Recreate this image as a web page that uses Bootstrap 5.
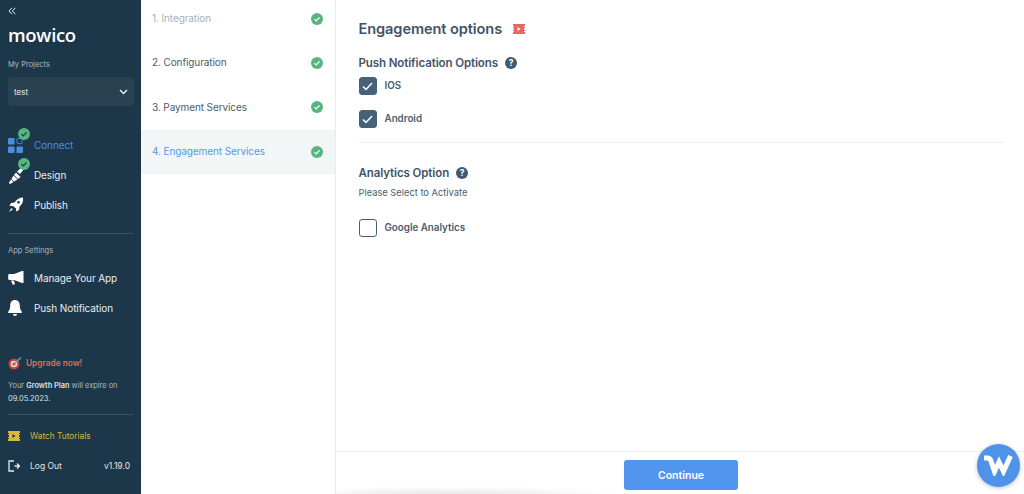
<!DOCTYPE html>
<html lang="en"><head><meta charset="utf-8"><title>Mowico</title>
<link href="https://cdn.jsdelivr.net/npm/bootstrap@5.3.0/dist/css/bootstrap.min.css" rel="stylesheet">
<style>
html,body{height:494px;overflow:hidden;background:#fff}
body{font-family:Inter,"Noto Sans",sans-serif;color:#3f5468;font-size:11px}
.shell{height:494px}
.side{width:141px;flex:none;background:#1c364a;color:#e6eaed;padding:0 0 0 8px;position:relative}
.side-in{width:126px}
.collapse-ic{display:block;height:14px;padding-top:2px;margin-bottom:11px}
.logo-txt{font-family:"Open Sans",sans-serif;font-weight:600;font-size:18.5px;line-height:20px;color:#fff;letter-spacing:-.3px;height:20px;margin-bottom:15px}
.lab{font-size:7.5px;line-height:10px;color:#aab6bf}
.proj{height:29px;margin-top:7px;background:#2a4151;border-radius:4px;padding:0 6px;font-size:8px;color:#e6eaed}
.mitem{height:30px;font-size:10px;letter-spacing:-.1px;color:#e9edef}
.mitem.on{color:#4a8ee0}
.mic{width:26px;flex:none;position:relative;height:22px;margin-right:0}
.tick{position:absolute;left:10px;top:-6px;width:12px;height:12px}
.mlist{margin-top:24px}
.rule{height:1px;background:#3a5163;margin:0}
.upg{color:#d9705a;font-weight:600;font-size:8.3px;margin-top:33px;height:14px}
.exp{font-size:7.4px;line-height:13px;color:#aab6bf;margin-top:9px}
.exp b{color:#dbe1e5;font-weight:600}
.exp span{color:#dbe1e5}
.tut{color:#d8b93f;font-size:8.3px;height:16px;margin-top:13px}
.out{font-size:8.5px;height:16px;margin-top:14px;color:#e0e5e8}
.steps{width:195px;flex:none;border-right:1px solid #e9ecee}
.stp{height:44.3px;padding:0 12px 0 11px;font-size:10px;color:#4a5c6c;letter-spacing:-.1px}
.stp.done{color:#a7b0b8;height:41px;padding-bottom:4px}
.stp.second{padding-bottom:1px}
.stp.act{background:#f3f6f6;color:#5797ea}
.mainp{min-width:0;position:relative}
.cont{padding:21px 20px 0 22.5px}
.ttl{font-size:14.6px;font-weight:600;color:#3f5468;line-height:16px;letter-spacing:-.1px}
.sub{font-size:11.5px;font-weight:600;color:#3f5468;line-height:14px;letter-spacing:-.1px}
.chk{width:18px;height:18px;border:1.5px solid #47617a;border-radius:3px;background:#47617a;flex:none;margin-right:8px}
.chk.off{background:#fff}
.optn{height:18px;font-size:9.8px;font-weight:600;color:#4b5d6c}
.note{font-size:9.3px;color:#4b5d6c;line-height:12px}
.hr0{height:1px;background:#eceff1}
.foot{height:43px;border-top:1px solid #eceff1;position:absolute;left:0;right:0;bottom:0;background:radial-gradient(ellipse 170px 8px at 114px 100%,rgba(0,0,0,.09),transparent)}
.go{width:114px;height:30px;background:#5295ee;border-radius:3px;color:#fff;font-size:10.5px;font-weight:600;border:0;padding:2px 0 0;margin-top:3px;margin-left:2px}
.fab{position:absolute;right:4px;bottom:7px;width:43px;height:43px;border-radius:50%;background:#4f93e8;box-shadow:0 1px 4px rgba(0,0,0,.25)}
</style></head><body>
<div class="shell d-flex">
<aside class="side">
 <div class="side-in d-flex flex-column">
  <span class="collapse-ic"><svg width="8" height="8" viewBox="0 0 8 8" fill="none" stroke="#e8ecef" stroke-width="1"><path d="M4 .8 1 4l3 3.200M7.400.8 4.400 4l3 3.200"/></svg></span>
  <div class="logo-txt">mowico</div>
  <div class="lab">My Projects</div>
  <div class="proj d-flex align-items-center justify-content-between"><span>test</span><svg width="9" height="6" viewBox="0 0 9 6" fill="none" stroke="#e6eaed" stroke-width="1.500"><path d="M1 1l3.500 3.500L8 1"/></svg></div>
  <div class="mlist">
   <div class="mitem on d-flex align-items-center"><span class="mic"><svg width="15" height="15" viewBox="0 0 16 16" style="margin-top:4px;display:block"><rect x="0" y="0" width="7" height="7" rx="1" fill="#4a8ee0"/><rect x="9.500" y=".5" width="5.500" height="5.500" rx="1" fill="none" stroke="#4a8ee0"/><rect x="0" y="9" width="7" height="7" rx="1" fill="#4a8ee0"/><rect x="9" y="9" width="7" height="7" rx="1" fill="#4a8ee0"/></svg><svg class="tick" viewBox="0 0 12 12"><circle cx="6" cy="6" r="6" fill="#57b67f"/><path d="M3.400 6.200 5.200 8l3.400-3.600" fill="none" stroke="#1c364a" stroke-width="1.200"/></svg></span>Connect</div>
   <div class="mitem d-flex align-items-center"><span class="mic"><svg width="18" height="18" viewBox="0 0 18 18" style="display:block;margin-top:3px"><path d="M8 5.500 12.500 10 10 12 6 8z" fill="#fff"/><path d="M9 4.500 14 0l2 2-4 5z" fill="#fff"/><path d="M5.500 8.500 9.500 12.500 6 14.500 3.500 12z" fill="#fff"/><path d="M3 12.500 5.500 15 2 17 .8 16z" fill="#fff"/></svg><svg class="tick" viewBox="0 0 12 12"><circle cx="6" cy="6" r="6" fill="#57b67f"/><path d="M3.400 6.200 5.200 8l3.400-3.600" fill="none" stroke="#1c364a" stroke-width="1.200"/></svg></span>Design</div>
   <div class="mitem d-flex align-items-center"><span class="mic"><svg width="16" height="16" viewBox="0 0 16 16" style="display:block;margin-top:3px"><path d="M15 .5c.5 4-.8 7-3.500 9l-.5 3.500-3 1.500V11.500L5 9H1.500L3 6l3.500-.5C9 2 11.500.7 15 .5z" fill="#fff"/><circle cx="10.500" cy="5.200" r="1.300" fill="#1c364a"/><path d="M3.500 11 .8 15l4-2.500z" fill="#fff"/></svg></span>Publish</div>
  </div>
  <div class="rule" style="margin-top:13px"></div>
  <div class="lab" style="margin-top:12px">App Settings</div>
  <div style="margin-top:7px">
   <div class="mitem d-flex align-items-center"><span class="mic"><svg width="16" height="14" viewBox="0 0 16 14" style="display:block;margin-top:4px"><path d="M14 0h1.500v12H14L6 9H1.500A1.300 1.300 0 0 1 .2 7.700V4.300A1.300 1.300 0 0 1 1.500 3H6z" fill="#fff"/><path d="M3 9.500h3l1 4H4.500z" fill="#fff"/></svg></span>Manage Your App</div>
   <div class="mitem d-flex align-items-center"><span class="mic"><svg width="14" height="16" viewBox="0 0 14 16" style="display:block;margin-top:3px"><path d="M7 0c3 0 4.800 2.200 4.800 5.500 0 3 .7 4.600 2 6V13H.2v-1.500c1.300-1.400 2-3 2-6C2.200 2.200 4 0 7 0z" fill="#fff"/><path d="M5 14h4a2 2 0 0 1-4 0z" fill="#fff"/></svg></span>Push Notification</div>
  </div>
  <div class="upg d-flex align-items-center"><svg width="15" height="14" viewBox="0 0 15 14" style="margin-right:3px;flex:none"><circle cx="6" cy="8" r="5.500" fill="#c9453f"/><circle cx="6" cy="8" r="3.300" fill="#f2d6cf"/><circle cx="6" cy="8" r="1.600" fill="#c9453f"/><path d="M6 8 13 1.500" stroke="#5fa6b8" stroke-width="1.500"/></svg>Upgrade now!</div>
  <div class="exp">Your <b>Growth Plan</b> will expire on<br><span>09.05.2023.</span></div>
  <div class="rule" style="margin-top:9px"></div>
  <div class="tut d-flex align-items-center"><svg width="12" height="10" viewBox="0 0 12 10" style="margin-right:10px;flex:none"><path fill-rule="evenodd" d="M0 0h12v2h-1v1h1v1h-1v2h1v1h-1v1h1v2H0V8h1V7H0V6h1V4H0V3h1V2H0z" fill="#d8b93f"/><path d="M4.500 3v4l3-2z" fill="#1c364a"/></svg>Watch Tutorials</div>
  <div class="out d-flex align-items-center justify-content-between"><span class="d-flex align-items-center"><svg width="12" height="12" viewBox="0 0 12 12" fill="none" stroke="#e6eaed" stroke-width="1.300" style="margin-right:10px"><path d="M6 1H1v10h5M6.500 6h5M9 3.500 11.500 6 9 8.500"/></svg>Log Out</span><span style="margin-right:4px">v1.19.0</span></div>
 </div>
</aside>
<nav class="steps">
 <div class="stp done d-flex align-items-center justify-content-between"><span>1. Integration</span><svg width="12" height="12" viewBox="0 0 12 12"><circle cx="6" cy="6" r="6" fill="#57b67f"/><path d="M3.400 6.200 5.200 8l3.400-3.600" fill="none" stroke="#fff" stroke-width="1.200"/></svg></div>
 <div class="stp second d-flex align-items-center justify-content-between"><span>2. Configuration</span><svg width="12" height="12" viewBox="0 0 12 12"><circle cx="6" cy="6" r="6" fill="#57b67f"/><path d="M3.400 6.200 5.200 8l3.400-3.600" fill="none" stroke="#fff" stroke-width="1.200"/></svg></div>
 <div class="stp d-flex align-items-center justify-content-between"><span>3. Payment Services</span><svg width="12" height="12" viewBox="0 0 12 12"><circle cx="6" cy="6" r="6" fill="#57b67f"/><path d="M3.400 6.200 5.200 8l3.400-3.600" fill="none" stroke="#fff" stroke-width="1.200"/></svg></div>
 <div class="stp act d-flex align-items-center justify-content-between"><span>4. Engagement Services</span><svg width="12" height="12" viewBox="0 0 12 12"><circle cx="6" cy="6" r="6" fill="#57b67f"/><path d="M3.400 6.200 5.200 8l3.400-3.600" fill="none" stroke="#fff" stroke-width="1.200"/></svg></div>
</nav>
<main class="mainp flex-grow-1">
 <div class="cont">
  <div class="ttl d-flex align-items-center">Engagement options<svg width="12" height="10" viewBox="0 0 12 10" style="margin-left:11px"><path fill-rule="evenodd" d="M0 0h12v2h-1v1h1v1h-1v2h1v1h-1v1h1v2H0V8h1V7H0V6h1V4H0V3h1V2H0z" fill="#e66a63"/><path d="M4.500 3v4l3-2z" fill="#fff"/></svg></div>
  <div class="sub d-flex align-items-center" style="margin-top:19px">Push Notification Options<svg width="12" height="12" viewBox="0 0 12 12" style="margin-left:7px"><circle cx="6" cy="6" r="6" fill="#3f5a72"/><text x="6" y="9" text-anchor="middle" font-size="8.500" font-weight="700" fill="#fff" font-family="Inter,sans-serif">?</text></svg></div>
  <div class="optn d-flex align-items-center" style="margin-top:7px"><span class="chk d-flex align-items-center justify-content-center"><svg width="11" height="9" viewBox="0 0 11 9" fill="none" stroke="#fff" stroke-width="1.500"><path d="M1 4.500 4 7.500 10 1"/></svg></span>IOS</div>
  <div class="optn d-flex align-items-center" style="margin-top:15px"><span class="chk d-flex align-items-center justify-content-center"><svg width="11" height="9" viewBox="0 0 11 9" fill="none" stroke="#fff" stroke-width="1.500"><path d="M1 4.500 4 7.500 10 1"/></svg></span>Android</div>
  <div class="hr0" style="margin-top:14px"></div>
  <div class="sub d-flex align-items-center" style="margin-top:23px">Analytics Option<svg width="12" height="12" viewBox="0 0 12 12" style="margin-left:7px"><circle cx="6" cy="6" r="6" fill="#3f5a72"/><text x="6" y="9" text-anchor="middle" font-size="8.500" font-weight="700" fill="#fff" font-family="Inter,sans-serif">?</text></svg></div>
  <div class="note" style="margin-top:7px">Please Select to Activate</div>
  <div class="optn d-flex align-items-center" style="margin-top:20px"><span class="chk off"></span>Google Analytics</div>
 </div>
 <div class="foot d-flex justify-content-center align-items-center"><button class="btn go" type="button">Continue</button></div>
 <div class="fab d-flex align-items-center justify-content-center"><svg width="30" height="21" viewBox="0 0 30 21" fill="none" stroke="#fff" stroke-width="5" stroke-linejoin="miter"><path d="M0 3h3c2.500 0 3.500 1 4 3l3.500 10.500L15 7l4.500 9.500L26.500 1"/></svg></div>
</main>
</div>
</body></html>
